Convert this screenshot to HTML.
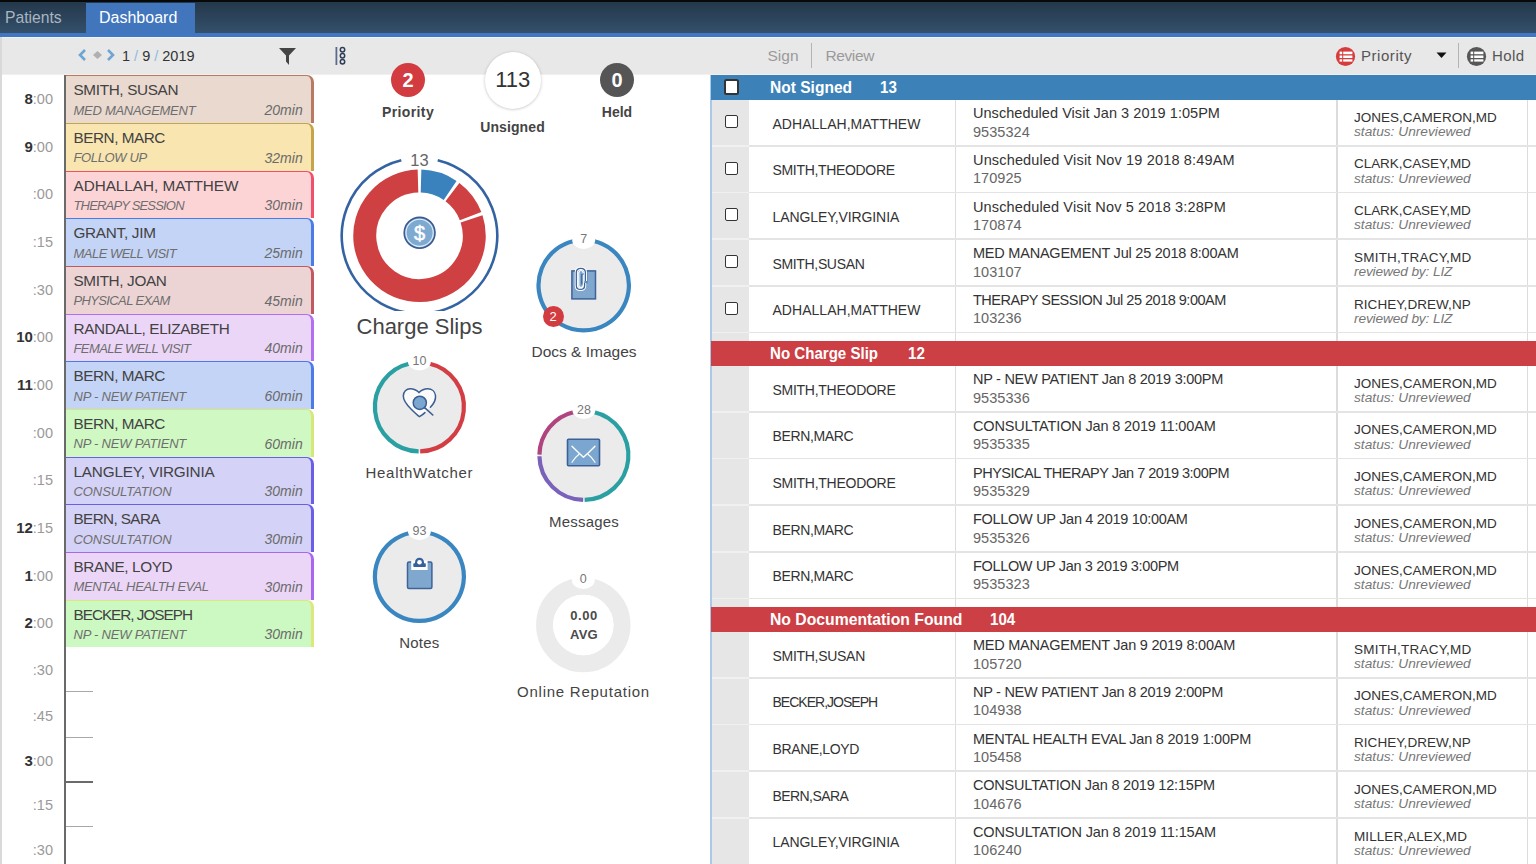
<!DOCTYPE html>
<html><head><meta charset="utf-8">
<style>
*{box-sizing:border-box}
html,body{margin:0;padding:0}
body{width:1536px;height:864px;overflow:hidden;position:relative;background:#fff;font-family:"Liberation Sans",sans-serif;color:#333}
.abs{position:absolute;white-space:nowrap}
.t{position:absolute;white-space:nowrap;line-height:1}
</style></head><body>

<div class="abs" style="left:0;top:0;width:1536px;height:2px;background:#07090b"></div>
<div class="abs" style="left:0;top:2px;width:1536px;height:31px;background:linear-gradient(#24384b,#34506b)"></div>
<div class="abs" style="left:85.5px;top:2.5px;width:109.5px;height:31px;background:#4176bd"></div>
<div class="abs" style="left:0;top:33px;width:1536px;height:4px;background:#3f77c2"></div>
<div class="t" style="left:5px;top:10.26px;font-size:15.7px;color:#a9b5c1">Patients</div>
<div class="t" style="left:99px;top:10.10px;font-size:16px;color:#fff">Dashboard</div>
<div class="abs" style="left:0;top:37px;width:1536px;height:38px;background:#e8e8e8;border-top:1.5px solid #f1f2f4;border-bottom:1.2px solid #f0f0f0"></div>
<svg class="abs" style="left:76px;top:47px" width="44" height="16" viewBox="0 0 44 16">
<path d="M9 3 L4 8 L9 13" fill="none" stroke="#6ea5d2" stroke-width="2.6"/>
<path d="M21.5 4 L26 8 L21.5 12 L17 8 Z" fill="#b0b0b0"/>
<path d="M32 3 L37 8 L32 13" fill="none" stroke="#6ea5d2" stroke-width="2.6"/>
</svg>
<div class="t" style="left:122px;top:48.88px;font-size:14.5px;color:#333">1 <span style="color:#8dbbe0">/</span> 9 <span style="color:#8dbbe0">/</span> 2019</div>
<svg class="abs" style="left:278px;top:47px" width="20" height="19" viewBox="0 0 20 19">
<path d="M1 1 L18 1 L11 8.5 L11 18 L8 14.5 L8 8.5 Z" fill="#444"/>
</svg>
<svg class="abs" style="left:333px;top:46px" width="16" height="20" viewBox="0 0 16 20">
<rect x="2.5" y="1" width="1.8" height="18" fill="#5a6a88"/>
<circle cx="9.5" cy="3.8" r="2.2" fill="none" stroke="#2e3c58" stroke-width="1.5"/>
<circle cx="9.5" cy="9.8" r="2.2" fill="none" stroke="#2e3c58" stroke-width="1.5"/>
<circle cx="9.5" cy="15.8" r="2.2" fill="none" stroke="#2e3c58" stroke-width="1.5"/>
</svg>
<div class="t" style="left:767.5px;top:48.03px;font-size:15.5px;color:#9a9a9a">Sign</div>
<div class="abs" style="left:811px;top:42.5px;width:1.2px;height:25.5px;background:#b4b4b4"></div>
<div class="t" style="left:825.5px;top:48.03px;font-size:15.5px;letter-spacing:-0.4px;color:#9a9a9a">Review</div>
<svg class="abs" style="left:1335.0px;top:45.5px" width="21" height="21" viewBox="0 0 21 21">
<circle cx="10.5" cy="10.5" r="9.6" fill="#d63c3c"/>
<rect x="4.6" y="5.6" width="2.6" height="2.6" fill="#fff"/><rect x="8.2" y="5.6" width="9.2" height="2.6" fill="#fff"/>
<rect x="4.6" y="9.5" width="2.6" height="2.5" fill="#fff"/><rect x="8.2" y="9.5" width="9.2" height="2.5" fill="#fff"/>
<rect x="4.6" y="13.3" width="2.6" height="2.3" fill="#fff"/><rect x="8.2" y="13.3" width="9.2" height="2.3" fill="#fff"/>
</svg>
<div class="t" style="left:1361px;top:47.55px;font-size:15px;letter-spacing:0.55px;color:#555">Priority</div>
<svg class="abs" style="left:1436px;top:52px" width="11" height="7" viewBox="0 0 11 7"><path d="M0.5 0.5 L10.5 0.5 L5.5 6 Z" fill="#111"/></svg>
<div class="abs" style="left:1458px;top:42.5px;width:1.2px;height:25.5px;background:#b4b4b4"></div>
<svg class="abs" style="left:1465.5px;top:45.5px" width="21" height="21" viewBox="0 0 21 21">
<circle cx="10.5" cy="10.5" r="9.6" fill="#575757"/>
<rect x="4.6" y="5.6" width="2.6" height="2.6" fill="#fff"/><rect x="8.2" y="5.6" width="9.2" height="2.6" fill="#fff"/>
<rect x="4.6" y="9.5" width="2.6" height="2.5" fill="#fff"/><rect x="8.2" y="9.5" width="9.2" height="2.5" fill="#fff"/>
<rect x="4.6" y="13.3" width="2.6" height="2.3" fill="#fff"/><rect x="8.2" y="13.3" width="9.2" height="2.3" fill="#fff"/>
</svg>
<div class="t" style="left:1492px;top:47.55px;font-size:15px;letter-spacing:0.4px;color:#555">Hold</div>
<div class="abs" style="left:0;top:37px;width:2px;height:827px;background:#d9d9d9"></div>
<div class="abs" style="left:64px;top:75px;width:2.2px;height:789px;background:#6a6a6a"></div>
<div class="abs" style="left:66.2px;top:75.40px;width:247.8px;height:47.67px;background:#e9d9cf;border-top:1px solid #b97a64;border-right:3px solid #b97a64;border-top-right-radius:7px"></div>
<div class="t" style="left:73.5px;top:82.30px;font-size:15.3px;letter-spacing:-0.350px;color:#424242">SMITH, SUSAN</div>
<div class="t" style="left:73.5px;top:103.55px;font-size:13px;font-style:italic;letter-spacing:-0.277px;color:#6e6e6e">MED MANAGEMENT</div>
<div class="t" style="left:2.6999999999999886px;top:102.90px;font-size:14px;width:300px;text-align:right;font-style:italic;color:#6a6a6a">20min</div>
<div class="abs" style="left:66.2px;top:123.07px;width:247.8px;height:47.67px;background:#f9e5b0;border-top:1px solid #c4a549;border-right:3px solid #c4a549;border-top-right-radius:7px"></div>
<div class="t" style="left:73.5px;top:129.97px;font-size:15.3px;letter-spacing:-0.465px;color:#424242">BERN, MARC</div>
<div class="t" style="left:73.5px;top:151.22px;font-size:13px;font-style:italic;letter-spacing:-0.375px;color:#6e6e6e">FOLLOW UP</div>
<div class="t" style="left:2.6999999999999886px;top:150.57px;font-size:14px;width:300px;text-align:right;font-style:italic;color:#6a6a6a">32min</div>
<div class="abs" style="left:66.2px;top:170.74px;width:247.8px;height:47.67px;background:#fdd4d6;border-top:1px solid #f1506c;border-right:3px solid #f1506c;border-top-right-radius:7px"></div>
<div class="t" style="left:73.5px;top:177.64px;font-size:15.3px;letter-spacing:-0.033px;color:#424242">ADHALLAH, MATTHEW</div>
<div class="t" style="left:73.5px;top:198.89px;font-size:13px;font-style:italic;letter-spacing:-0.825px;color:#6e6e6e">THERAPY SESSION</div>
<div class="t" style="left:2.6999999999999886px;top:198.24px;font-size:14px;width:300px;text-align:right;font-style:italic;color:#6a6a6a">30min</div>
<div class="abs" style="left:66.2px;top:218.41px;width:247.8px;height:47.67px;background:#c4d4f6;border-top:1px solid #4a7be6;border-right:3px solid #4a7be6;border-top-right-radius:7px"></div>
<div class="t" style="left:73.5px;top:225.31px;font-size:15.3px;letter-spacing:-0.288px;color:#424242">GRANT, JIM</div>
<div class="t" style="left:73.5px;top:246.56px;font-size:13px;font-style:italic;letter-spacing:-0.513px;color:#6e6e6e">MALE WELL VISIT</div>
<div class="t" style="left:2.6999999999999886px;top:245.91px;font-size:14px;width:300px;text-align:right;font-style:italic;color:#6a6a6a">25min</div>
<div class="abs" style="left:66.2px;top:266.08px;width:247.8px;height:47.67px;background:#edd4d4;border-top:1px solid #c05a60;border-right:3px solid #c05a60;border-top-right-radius:7px"></div>
<div class="t" style="left:73.5px;top:272.98px;font-size:15.3px;letter-spacing:-0.354px;color:#424242">SMITH, JOAN</div>
<div class="t" style="left:73.5px;top:294.23px;font-size:13px;font-style:italic;letter-spacing:-0.633px;color:#6e6e6e">PHYSICAL EXAM</div>
<div class="t" style="left:2.6999999999999886px;top:293.58px;font-size:14px;width:300px;text-align:right;font-style:italic;color:#6a6a6a">45min</div>
<div class="abs" style="left:66.2px;top:313.75px;width:247.8px;height:47.67px;background:#ecd6f8;border-top:1px solid #b46ef0;border-right:3px solid #b46ef0;border-top-right-radius:7px"></div>
<div class="t" style="left:73.5px;top:320.64px;font-size:15.3px;letter-spacing:-0.360px;color:#424242">RANDALL, ELIZABETH</div>
<div class="t" style="left:73.5px;top:341.90px;font-size:13px;font-style:italic;letter-spacing:-0.590px;color:#6e6e6e">FEMALE WELL VISIT</div>
<div class="t" style="left:2.6999999999999886px;top:341.25px;font-size:14px;width:300px;text-align:right;font-style:italic;color:#6a6a6a">40min</div>
<div class="abs" style="left:66.2px;top:361.42px;width:247.8px;height:47.67px;background:#c4d4f6;border-top:1px solid #4a7be6;border-right:3px solid #4a7be6;border-top-right-radius:7px"></div>
<div class="t" style="left:73.5px;top:368.31px;font-size:15.3px;letter-spacing:-0.465px;color:#424242">BERN, MARC</div>
<div class="t" style="left:73.5px;top:389.57px;font-size:13px;font-style:italic;letter-spacing:-0.215px;color:#6e6e6e">NP - NEW PATIENT</div>
<div class="t" style="left:2.6999999999999886px;top:388.92px;font-size:14px;width:300px;text-align:right;font-style:italic;color:#6a6a6a">60min</div>
<div class="abs" style="left:66.2px;top:409.09px;width:247.8px;height:47.67px;background:#cff8c2;border-top:1px solid #d8e878;border-right:3px solid #d8e878;border-top-right-radius:7px"></div>
<div class="t" style="left:73.5px;top:415.99px;font-size:15.3px;letter-spacing:-0.465px;color:#424242">BERN, MARC</div>
<div class="t" style="left:73.5px;top:437.24px;font-size:13px;font-style:italic;letter-spacing:-0.215px;color:#6e6e6e">NP - NEW PATIENT</div>
<div class="t" style="left:2.6999999999999886px;top:436.59px;font-size:14px;width:300px;text-align:right;font-style:italic;color:#6a6a6a">60min</div>
<div class="abs" style="left:66.2px;top:456.76px;width:247.8px;height:47.67px;background:#d4d2f6;border-top:1px solid #6a5ee6;border-right:3px solid #6a5ee6;border-top-right-radius:7px"></div>
<div class="t" style="left:73.5px;top:463.65px;font-size:15.3px;letter-spacing:-0.191px;color:#424242">LANGLEY, VIRGINIA</div>
<div class="t" style="left:73.5px;top:484.91px;font-size:13px;font-style:italic;letter-spacing:-0.079px;color:#6e6e6e">CONSULTATION</div>
<div class="t" style="left:2.6999999999999886px;top:484.26px;font-size:14px;width:300px;text-align:right;font-style:italic;color:#6a6a6a">30min</div>
<div class="abs" style="left:66.2px;top:504.43px;width:247.8px;height:47.67px;background:#d4d2f6;border-top:1px solid #6a5ee6;border-right:3px solid #6a5ee6;border-top-right-radius:7px"></div>
<div class="t" style="left:73.5px;top:511.33px;font-size:15.3px;letter-spacing:-0.626px;color:#424242">BERN, SARA</div>
<div class="t" style="left:73.5px;top:532.58px;font-size:13px;font-style:italic;letter-spacing:-0.079px;color:#6e6e6e">CONSULTATION</div>
<div class="t" style="left:2.6999999999999886px;top:531.93px;font-size:14px;width:300px;text-align:right;font-style:italic;color:#6a6a6a">30min</div>
<div class="abs" style="left:66.2px;top:552.10px;width:247.8px;height:47.67px;background:#ecd6f8;border-top:1px solid #a868ee;border-right:3px solid #a868ee;border-top-right-radius:7px"></div>
<div class="t" style="left:73.5px;top:559.00px;font-size:15.3px;letter-spacing:-0.378px;color:#424242">BRANE, LOYD</div>
<div class="t" style="left:73.5px;top:580.25px;font-size:13px;font-style:italic;letter-spacing:-0.362px;color:#6e6e6e">MENTAL HEALTH EVAL</div>
<div class="t" style="left:2.6999999999999886px;top:579.60px;font-size:14px;width:300px;text-align:right;font-style:italic;color:#6a6a6a">30min</div>
<div class="abs" style="left:66.2px;top:599.77px;width:247.8px;height:47.67px;background:#ccf8c2;border-top:1px solid #dce87c;border-right:3px solid #dce87c;border-top-right-radius:7px"></div>
<div class="t" style="left:73.5px;top:606.66px;font-size:15.3px;letter-spacing:-1.008px;color:#424242">BECKER, JOSEPH</div>
<div class="t" style="left:73.5px;top:627.92px;font-size:13px;font-style:italic;letter-spacing:-0.215px;color:#6e6e6e">NP - NEW PATIENT</div>
<div class="t" style="left:2.6999999999999886px;top:627.27px;font-size:14px;width:300px;text-align:right;font-style:italic;color:#6a6a6a">30min</div>
<div class="t" style="left:-247px;top:91.11px;font-size:14.5px;width:300px;text-align:right;color:#9a9a9a"><b style="color:#333;font-size:15px">8</b>:00</div>
<div class="t" style="left:-247px;top:138.78px;font-size:14.5px;width:300px;text-align:right;color:#9a9a9a"><b style="color:#333;font-size:15px">9</b>:00</div>
<div class="t" style="left:-247px;top:186.45px;font-size:14.5px;width:300px;text-align:right;color:#9a9a9a"><b style="color:#333;font-size:15px"></b>:00</div>
<div class="t" style="left:-247px;top:234.12px;font-size:14.5px;width:300px;text-align:right;color:#9a9a9a"><b style="color:#333;font-size:15px"></b>:15</div>
<div class="t" style="left:-247px;top:281.79px;font-size:14.5px;width:300px;text-align:right;color:#9a9a9a"><b style="color:#333;font-size:15px"></b>:30</div>
<div class="t" style="left:-247px;top:329.46px;font-size:14.5px;width:300px;text-align:right;color:#9a9a9a"><b style="color:#333;font-size:15px">10</b>:00</div>
<div class="t" style="left:-247px;top:377.13px;font-size:14.5px;width:300px;text-align:right;color:#9a9a9a"><b style="color:#333;font-size:15px">11</b>:00</div>
<div class="t" style="left:-247px;top:424.80px;font-size:14.5px;width:300px;text-align:right;color:#9a9a9a"><b style="color:#333;font-size:15px"></b>:00</div>
<div class="t" style="left:-247px;top:472.47px;font-size:14.5px;width:300px;text-align:right;color:#9a9a9a"><b style="color:#333;font-size:15px"></b>:15</div>
<div class="t" style="left:-247px;top:520.14px;font-size:14.5px;width:300px;text-align:right;color:#9a9a9a"><b style="color:#333;font-size:15px">12</b>:15</div>
<div class="t" style="left:-247px;top:567.81px;font-size:14.5px;width:300px;text-align:right;color:#9a9a9a"><b style="color:#333;font-size:15px">1</b>:00</div>
<div class="t" style="left:-247px;top:615.48px;font-size:14.5px;width:300px;text-align:right;color:#9a9a9a"><b style="color:#333;font-size:15px">2</b>:00</div>
<div class="t" style="left:-247px;top:662.48px;font-size:14.5px;width:300px;text-align:right;color:#9a9a9a"><b style="color:#333;font-size:15px"></b>:30</div>
<div class="t" style="left:-247px;top:707.67px;font-size:14.5px;width:300px;text-align:right;color:#9a9a9a"><b style="color:#333;font-size:15px"></b>:45</div>
<div class="t" style="left:-247px;top:752.77px;font-size:14.5px;width:300px;text-align:right;color:#9a9a9a"><b style="color:#333;font-size:15px">3</b>:00</div>
<div class="t" style="left:-247px;top:797.27px;font-size:14.5px;width:300px;text-align:right;color:#9a9a9a"><b style="color:#333;font-size:15px"></b>:15</div>
<div class="t" style="left:-247px;top:841.88px;font-size:14.5px;width:300px;text-align:right;color:#9a9a9a"><b style="color:#333;font-size:15px"></b>:30</div>
<div class="abs" style="left:66.2px;top:691px;width:27.3px;height:1px;background:#a8a8a8"></div>
<div class="abs" style="left:66.2px;top:737px;width:27.3px;height:1px;background:#a8a8a8"></div>
<div class="abs" style="left:66.2px;top:781px;width:27.3px;height:1.6px;background:#6a6a6a"></div>
<div class="abs" style="left:66.2px;top:826px;width:27.3px;height:1px;background:#a8a8a8"></div>
<div class="abs" style="left:391px;top:62.5px;width:34px;height:34px;border-radius:50%;background:#d23b3f"></div>
<div class="t" style="left:258.0px;top:70.20px;font-size:20px;width:300px;text-align:center;font-weight:bold;color:#fff">2</div>
<div class="abs" style="left:484.5px;top:52px;width:56.5px;height:56.5px;border-radius:50%;background:#fff;box-shadow:0 0.5px 3px rgba(0,0,0,0.25)"></div>
<div class="t" style="left:362.70000000000005px;top:69.30px;font-size:22px;width:300px;text-align:center;color:#333">113</div>
<div class="abs" style="left:600px;top:62.5px;width:34px;height:34px;border-radius:50%;background:#555"></div>
<div class="t" style="left:467.0px;top:70.20px;font-size:20px;width:300px;text-align:center;font-weight:bold;color:#fff">0</div>
<div class="t" style="left:258.0px;top:105.30px;font-size:14px;width:300px;text-align:center;font-weight:bold;letter-spacing:0.4px;color:#444">Priority</div>
<div class="t" style="left:362.5px;top:119.90px;font-size:14px;width:300px;text-align:center;font-weight:bold;letter-spacing:0.1px;color:#444">Unsigned</div>
<div class="t" style="left:467.0px;top:105.30px;font-size:14px;width:300px;text-align:center;font-weight:bold;color:#444">Held</div>
<svg class="abs" style="left:0;top:0" width="710" height="864" viewBox="0 0 710 864">
<defs><clipPath id="cs"><rect x="330" y="140" width="180" height="171"/></clipPath></defs>
<path clip-path="url(#cs)" d="M437.66 160.15 A77.8 77.8 0 1 1 401.34 160.15" fill="none" stroke="#3463a3" stroke-width="2.6"/>
<path d="M421.03 181.07 A54.75 54.75 0 0 1 450.12 190.41" fill="none" stroke="#3a82bd" stroke-width="23"/>
<path d="M452.45 192.07 A54.75 54.75 0 0 1 470.61 216.18" fill="none" stroke="#cf4042" stroke-width="23"/>
<path d="M471.57 218.88 A54.75 54.75 0 1 1 417.97 181.07" fill="none" stroke="#cf4042" stroke-width="23"/>
<circle cx="419.6" cy="232.8" r="15.4" fill="#7eaad2" stroke="#3a5c92" stroke-width="1.6"/>
<circle cx="419.6" cy="232.8" r="13.6" fill="none" stroke="#e4eef8" stroke-width="1.1"/>
<circle cx="583.7" cy="285.2" r="46.3" fill="#ebebeb"/><path d="M593.48 241.07 A45.199999999999996 45.199999999999996 0 1 1 573.92 241.07" fill="none" stroke="#3a86c0" stroke-width="4.2"/>
<circle cx="419.4" cy="406.9" r="45.6" fill="#ebebeb"/><path d="M429.03 363.45 A44.5 44.5 0 0 1 420.18 451.39" fill="none" stroke="#d23e44" stroke-width="4.2"/><path d="M418.62 451.39 A44.5 44.5 0 0 1 409.77 363.45" fill="none" stroke="#2aa0a3" stroke-width="4.2"/>
<circle cx="583.9" cy="455.4" r="45.6" fill="#ebebeb"/><path d="M593.53 411.95 A44.5 44.5 0 0 1 584.68 499.89" fill="none" stroke="#2aa0a3" stroke-width="4.2"/><path d="M583.12 499.89 A44.5 44.5 0 0 1 539.41 456.18" fill="none" stroke="#7a62bb" stroke-width="4.2"/><path d="M539.41 454.62 A44.5 44.5 0 0 1 574.27 411.95" fill="none" stroke="#b0447e" stroke-width="4.2"/>
<circle cx="419.4" cy="576.4" r="45.6" fill="#ebebeb"/><path d="M429.03 532.95 A44.5 44.5 0 1 1 409.77 532.95" fill="none" stroke="#3a86c0" stroke-width="4.2"/>
<circle cx="583.3" cy="625" r="38.7" fill="none" stroke="#ebebeb" stroke-width="17"/>
<circle cx="583.3" cy="625" r="30.2" fill="#fff"/>
<ellipse cx="583.7" cy="240" rx="11.5" ry="9" fill="#fff"/>
<ellipse cx="419.4" cy="361.5" rx="11.5" ry="9" fill="#fff"/>
<ellipse cx="583.9" cy="410" rx="11.5" ry="9" fill="#fff"/>
<ellipse cx="419.4" cy="531" rx="11.5" ry="9" fill="#fff"/>
<ellipse cx="583.3" cy="580" rx="11.5" ry="9" fill="#fff"/>
<ellipse cx="419.5" cy="159" rx="18" ry="7" fill="#fff"/>
</svg>
<div class="t" style="left:269.5px;top:151.97px;font-size:16.5px;width:300px;text-align:center;color:#666">13</div>
<div class="t" style="left:269.6px;top:223.00px;font-size:20px;width:300px;text-align:center;color:#fff;-webkit-text-stroke:0.5px #fff">$</div>
<div class="t" style="left:433.70000000000005px;top:233.18px;font-size:12.5px;width:300px;text-align:center;color:#777">7</div>
<div class="t" style="left:269.4px;top:355.18px;font-size:12.5px;width:300px;text-align:center;color:#777">10</div>
<div class="t" style="left:433.9px;top:404.38px;font-size:12.5px;width:300px;text-align:center;color:#777">28</div>
<div class="t" style="left:269.4px;top:524.88px;font-size:12.5px;width:300px;text-align:center;color:#777">93</div>
<div class="t" style="left:433.29999999999995px;top:573.17px;font-size:12.5px;width:300px;text-align:center;color:#777">0</div>
<div class="t" style="left:269.5px;top:316.30px;font-size:22px;width:300px;text-align:center;color:#444">Charge Slips</div>
<div class="t" style="left:434.0px;top:344.02px;font-size:15.5px;width:300px;text-align:center;color:#444">Docs &amp; Images</div>
<div class="t" style="left:269.4px;top:464.55px;font-size:15px;width:300px;text-align:center;letter-spacing:0.7px;color:#444">HealthWatcher</div>
<div class="t" style="left:434.0px;top:514.05px;font-size:15px;width:300px;text-align:center;letter-spacing:0.2px;color:#444">Messages</div>
<div class="t" style="left:269.4px;top:635.05px;font-size:15px;width:300px;text-align:center;letter-spacing:0.2px;color:#444">Notes</div>
<div class="t" style="left:433.5px;top:684.45px;font-size:15px;width:300px;text-align:center;letter-spacing:0.75px;color:#444">Online Reputation</div>
<div class="t" style="left:434.0px;top:609.15px;font-size:13px;width:300px;text-align:center;font-weight:bold;letter-spacing:0.6px;color:#4a4a4a">0.00</div>
<div class="t" style="left:434.0px;top:628.15px;font-size:13px;width:300px;text-align:center;font-weight:bold;letter-spacing:0.2px;color:#4a4a4a">AVG</div>
<svg class="abs" style="left:569px;top:264px" width="30" height="37" viewBox="0 0 30 37">
<rect x="2.9" y="6.9" width="23.6" height="28" fill="#80a7cd" stroke="#3d6398" stroke-width="1.5"/>
<rect x="16.5" y="7.5" width="2.2" height="12" fill="#5f86b4"/>
<path d="M14.2 11 L14.2 21.5 Q14.2 23.3 12 23.3 Q9.8 23.3 9.8 21.5 L9.8 9 Q9.8 6.6 12 6.6 Q14.2 6.6 14.2 9" fill="none" stroke="#fff" stroke-width="1.2"/>
<path d="M16.4 17 L16.4 8.6 Q16.4 4.3 11.8 4.3 Q7.3 4.3 7.3 8.6 L7.3 21.4 Q7.3 25.4 11.4 25.4 Q15.6 25.4 15.6 21.4 L15.6 19" fill="none" stroke="#fff" stroke-width="3.2"/>
<path d="M16.4 17 L16.4 8.6 Q16.4 4.3 11.8 4.3 Q7.3 4.3 7.3 8.6 L7.3 21.4 Q7.3 25.4 11.4 25.4 Q15.6 25.4 15.6 21.4 L15.6 19" fill="none" stroke="#3d6398" stroke-width="1.3"/>
<path d="M12.8 10 L12.8 20.5" fill="none" stroke="#3d6398" stroke-width="1.3"/>
</svg>
<div class="abs" style="left:542.5px;top:305.5px;width:21px;height:21px;border-radius:50%;background:#d23b3f"></div>
<div class="t" style="left:403.0px;top:309.95px;font-size:13px;width:300px;text-align:center;color:#fff">2</div>
<svg class="abs" style="left:400px;top:385px" width="38" height="34" viewBox="0 0 38 34">
<path d="M19 7.6 C21 5.5 24 3.8 27.8 3.8 C31.5 3.8 35 6 35.5 10.5 C36 15 34 18.5 30.4 22.2 L19.5 31.7 C17 30 14 27 11 24 C7 20 3.3 16 3.3 11 C3.3 6.5 6.5 3.8 10.2 3.8 C14 3.8 17 5.5 19 7.6 Z" fill="#fbfbfb"/>
<path d="M30.4 22.2 C34 18.5 36 15 35.5 10.5 C35 6 31.5 3.8 27.8 3.8 C24 3.8 21 5.5 19 7.6 C17 5.5 14 3.8 10.2 3.8 C6.5 3.8 3.3 6.5 3.3 11 C3.3 16 7 20 11 24 C14 27 17 30 19.5 31.7 C21.5 30.5 23.5 29 24.9 27.6" fill="none" stroke="#3a5d94" stroke-width="1.5" stroke-linecap="round"/>
<circle cx="19.8" cy="17.8" r="6.6" fill="#7ba6cf" stroke="#3a5d94" stroke-width="1.5"/>
<path d="M24.6 22.6 L32.8 30" stroke="#3a5d94" stroke-width="1.6" stroke-linecap="round"/>
</svg>
<svg class="abs" style="left:566px;top:438px" width="35" height="29" viewBox="0 0 35 29">
<rect x="1.5" y="1.2" width="32" height="26.5" rx="1" fill="#7ba6cf" stroke="#3d6097" stroke-width="1.6"/>
<path d="M6 8.3 Q14 16.3 17.5 19.2 Q21 16.3 29 8.3" fill="none" stroke="#fff" stroke-width="1.4" stroke-linecap="round"/>
<path d="M6 24.3 Q9 19.3 13 16.3 M29 24.3 Q26 19.3 22 16.3" fill="none" stroke="#fff" stroke-width="1.2" stroke-linecap="round"/>
</svg>
<svg class="abs" style="left:404px;top:555px" width="31" height="37" viewBox="0 0 31 37">
<rect x="3.5" y="6.9" width="24.4" height="26.5" rx="1.5" fill="#80a7cd" stroke="#3d6398" stroke-width="1.5"/>
<rect x="7.2" y="5.5" width="16.4" height="9.5" fill="#fdfdfd"/>
<rect x="9.3" y="8.3" width="12.5" height="3.8" rx="0.8" fill="#35609a"/>
<path d="M11 9 L11 7.2 A4.5 4.5 0 0 1 20 7.2 L20 9 Z" fill="#35609a"/>
<circle cx="15.5" cy="7.2" r="2.3" fill="#fff"/>
</svg>
<div class="abs" style="left:710px;top:75px;width:2px;height:789px;background:#a9c9e8"></div>
<div class="abs" style="left:712px;top:100px;width:37px;height:764px;background:#e6e6e6"></div>
<div class="abs" style="left:955px;top:100px;width:1.3px;height:764px;background:#dcdcdc"></div>
<div class="abs" style="left:1336.3px;top:100px;width:1.3px;height:764px;background:#dcdcdc"></div>
<div class="abs" style="left:1527px;top:100px;width:1.3px;height:764px;background:#dcdcdc"></div>
<div class="abs" style="left:711px;top:75px;width:825px;height:25px;background:#3c82b9"></div>
<div class="t" style="left:769.7px;top:79.15px;font-size:17px;font-weight:bold;color:#fff;transform:scaleX(0.915);transform-origin:0 0">Not Signed</div>
<div class="t" style="left:880px;top:79.15px;font-size:17px;font-weight:bold;color:#fff;transform:scaleX(0.89);transform-origin:0 0">13</div>
<div class="abs" style="left:724px;top:79.3px;width:14.5px;height:15.5px;border:2px solid #333;border-radius:2.5px;background:#fff"></div>
<div class="abs" style="left:712px;top:144.90px;width:37px;height:1.8px;background:#f0f0f0"></div><div class="abs" style="left:749px;top:144.90px;width:787px;height:1.8px;background:#e4e4e4"></div>
<div class="abs" style="left:725px;top:115.00px;width:13px;height:13px;border:1.6px solid #333;border-radius:2px;background:#fff"></div>
<div class="t" style="left:772.5px;top:116.60px;font-size:14px;letter-spacing:0.028px;color:#333">ADHALLAH,MATTHEW</div>
<div class="t" style="left:973px;top:106.38px;font-size:14.5px;letter-spacing:0.040px;color:#333">Unscheduled Visit Jan 3 2019 1:05PM</div>
<div class="t" style="left:973px;top:124.58px;font-size:14.5px;letter-spacing:0.05px;color:#666">9535324</div>
<div class="t" style="left:1354px;top:110.73px;font-size:13.5px;letter-spacing:0.012px;color:#333">JONES,CAMERON,MD</div>
<div class="t" style="left:1354px;top:125.05px;font-size:13.7px;font-style:italic;letter-spacing:0.016px;color:#777">status: Unreviewed</div>
<div class="abs" style="left:712px;top:191.60px;width:37px;height:1.8px;background:#f0f0f0"></div><div class="abs" style="left:749px;top:191.60px;width:787px;height:1.8px;background:#e4e4e4"></div>
<div class="abs" style="left:725px;top:161.70px;width:13px;height:13px;border:1.6px solid #333;border-radius:2px;background:#fff"></div>
<div class="t" style="left:772.5px;top:163.30px;font-size:14px;letter-spacing:-0.327px;color:#333">SMITH,THEODORE</div>
<div class="t" style="left:973px;top:153.07px;font-size:14.5px;letter-spacing:0.157px;color:#333">Unscheduled Visit Nov 19 2018 8:49AM</div>
<div class="t" style="left:973px;top:171.28px;font-size:14.5px;letter-spacing:0.05px;color:#666">170925</div>
<div class="t" style="left:1354px;top:157.42px;font-size:13.5px;letter-spacing:-0.053px;color:#333">CLARK,CASEY,MD</div>
<div class="t" style="left:1354px;top:171.75px;font-size:13.7px;font-style:italic;letter-spacing:0.016px;color:#777">status: Unreviewed</div>
<div class="abs" style="left:712px;top:238.30px;width:37px;height:1.8px;background:#f0f0f0"></div><div class="abs" style="left:749px;top:238.30px;width:787px;height:1.8px;background:#e4e4e4"></div>
<div class="abs" style="left:725px;top:208.40px;width:13px;height:13px;border:1.6px solid #333;border-radius:2px;background:#fff"></div>
<div class="t" style="left:772.5px;top:210.00px;font-size:14px;letter-spacing:-0.090px;color:#333">LANGLEY,VIRGINIA</div>
<div class="t" style="left:973px;top:199.78px;font-size:14.5px;letter-spacing:0.140px;color:#333">Unscheduled Visit Nov 5 2018 3:28PM</div>
<div class="t" style="left:973px;top:217.98px;font-size:14.5px;letter-spacing:0.05px;color:#666">170874</div>
<div class="t" style="left:1354px;top:204.12px;font-size:13.5px;letter-spacing:-0.053px;color:#333">CLARK,CASEY,MD</div>
<div class="t" style="left:1354px;top:218.46px;font-size:13.7px;font-style:italic;letter-spacing:0.016px;color:#777">status: Unreviewed</div>
<div class="abs" style="left:712px;top:285.00px;width:37px;height:1.8px;background:#f0f0f0"></div><div class="abs" style="left:749px;top:285.00px;width:787px;height:1.8px;background:#e4e4e4"></div>
<div class="abs" style="left:725px;top:255.10px;width:13px;height:13px;border:1.6px solid #333;border-radius:2px;background:#fff"></div>
<div class="t" style="left:772.5px;top:256.70px;font-size:14px;letter-spacing:-0.344px;color:#333">SMITH,SUSAN</div>
<div class="t" style="left:973px;top:246.48px;font-size:14.5px;letter-spacing:-0.222px;color:#333">MED MANAGEMENT Jul 25 2018 8:00AM</div>
<div class="t" style="left:973px;top:264.68px;font-size:14.5px;letter-spacing:0.05px;color:#666">103107</div>
<div class="t" style="left:1354px;top:250.83px;font-size:13.5px;letter-spacing:0.213px;color:#333">SMITH,TRACY,MD</div>
<div class="t" style="left:1354px;top:265.16px;font-size:13.7px;font-style:italic;letter-spacing:-0.133px;color:#777">reviewed by: LIZ</div>
<div class="abs" style="left:712px;top:331.70px;width:37px;height:1.8px;background:#f0f0f0"></div><div class="abs" style="left:749px;top:331.70px;width:787px;height:1.8px;background:#e4e4e4"></div>
<div class="abs" style="left:725px;top:301.80px;width:13px;height:13px;border:1.6px solid #333;border-radius:2px;background:#fff"></div>
<div class="t" style="left:772.5px;top:303.40px;font-size:14px;letter-spacing:0.028px;color:#333">ADHALLAH,MATTHEW</div>
<div class="t" style="left:973px;top:293.18px;font-size:14.5px;letter-spacing:-0.498px;color:#333">THERAPY SESSION Jul 25 2018 9:00AM</div>
<div class="t" style="left:973px;top:311.38px;font-size:14.5px;letter-spacing:0.05px;color:#666">103236</div>
<div class="t" style="left:1354px;top:297.52px;font-size:13.5px;letter-spacing:0.055px;color:#333">RICHEY,DREW,NP</div>
<div class="t" style="left:1354px;top:311.86px;font-size:13.7px;font-style:italic;letter-spacing:-0.133px;color:#777">reviewed by: LIZ</div>
<div class="abs" style="left:711px;top:341px;width:825px;height:25px;background:#cc3f44"></div>
<div class="t" style="left:769.7px;top:345.15px;font-size:17px;font-weight:bold;color:#fff;transform:scaleX(0.887);transform-origin:0 0">No Charge Slip</div>
<div class="t" style="left:907.5px;top:345.15px;font-size:17px;font-weight:bold;color:#fff;transform:scaleX(0.89);transform-origin:0 0">12</div>
<div class="abs" style="left:712px;top:410.90px;width:37px;height:1.8px;background:#f0f0f0"></div><div class="abs" style="left:749px;top:410.90px;width:787px;height:1.8px;background:#e4e4e4"></div>
<div class="t" style="left:772.5px;top:382.60px;font-size:14px;letter-spacing:-0.270px;color:#333">SMITH,THEODORE</div>
<div class="t" style="left:973px;top:372.38px;font-size:14.5px;letter-spacing:-0.272px;color:#333">NP - NEW PATIENT Jan 8 2019 3:00PM</div>
<div class="t" style="left:973px;top:390.57px;font-size:14.5px;letter-spacing:0.05px;color:#666">9535336</div>
<div class="t" style="left:1354px;top:376.72px;font-size:13.5px;letter-spacing:0.012px;color:#333">JONES,CAMERON,MD</div>
<div class="t" style="left:1354px;top:391.06px;font-size:13.7px;font-style:italic;letter-spacing:0.016px;color:#777">status: Unreviewed</div>
<div class="abs" style="left:712px;top:457.60px;width:37px;height:1.8px;background:#f0f0f0"></div><div class="abs" style="left:749px;top:457.60px;width:787px;height:1.8px;background:#e4e4e4"></div>
<div class="t" style="left:772.5px;top:429.30px;font-size:14px;letter-spacing:-0.368px;color:#333">BERN,MARC</div>
<div class="t" style="left:973px;top:419.07px;font-size:14.5px;letter-spacing:-0.146px;color:#333">CONSULTATION Jan 8 2019 11:00AM</div>
<div class="t" style="left:973px;top:437.27px;font-size:14.5px;letter-spacing:0.05px;color:#666">9535335</div>
<div class="t" style="left:1354px;top:423.42px;font-size:13.5px;letter-spacing:0.012px;color:#333">JONES,CAMERON,MD</div>
<div class="t" style="left:1354px;top:437.75px;font-size:13.7px;font-style:italic;letter-spacing:0.016px;color:#777">status: Unreviewed</div>
<div class="abs" style="left:712px;top:504.30px;width:37px;height:1.8px;background:#f0f0f0"></div><div class="abs" style="left:749px;top:504.30px;width:787px;height:1.8px;background:#e4e4e4"></div>
<div class="t" style="left:772.5px;top:476.00px;font-size:14px;letter-spacing:-0.270px;color:#333">SMITH,THEODORE</div>
<div class="t" style="left:973px;top:465.77px;font-size:14.5px;letter-spacing:-0.499px;color:#333">PHYSICAL THERAPY Jan 7 2019 3:00PM</div>
<div class="t" style="left:973px;top:483.97px;font-size:14.5px;letter-spacing:0.05px;color:#666">9535329</div>
<div class="t" style="left:1354px;top:470.12px;font-size:13.5px;letter-spacing:0.012px;color:#333">JONES,CAMERON,MD</div>
<div class="t" style="left:1354px;top:484.45px;font-size:13.7px;font-style:italic;letter-spacing:0.016px;color:#777">status: Unreviewed</div>
<div class="abs" style="left:712px;top:551.00px;width:37px;height:1.8px;background:#f0f0f0"></div><div class="abs" style="left:749px;top:551.00px;width:787px;height:1.8px;background:#e4e4e4"></div>
<div class="t" style="left:772.5px;top:522.70px;font-size:14px;letter-spacing:-0.368px;color:#333">BERN,MARC</div>
<div class="t" style="left:973px;top:512.48px;font-size:14.5px;letter-spacing:-0.300px;color:#333">FOLLOW UP Jan 4 2019 10:00AM</div>
<div class="t" style="left:973px;top:530.67px;font-size:14.5px;letter-spacing:0.05px;color:#666">9535326</div>
<div class="t" style="left:1354px;top:516.83px;font-size:13.5px;letter-spacing:0.012px;color:#333">JONES,CAMERON,MD</div>
<div class="t" style="left:1354px;top:531.16px;font-size:13.7px;font-style:italic;letter-spacing:0.016px;color:#777">status: Unreviewed</div>
<div class="abs" style="left:712px;top:597.70px;width:37px;height:1.8px;background:#f0f0f0"></div><div class="abs" style="left:749px;top:597.70px;width:787px;height:1.8px;background:#e4e4e4"></div>
<div class="t" style="left:772.5px;top:569.40px;font-size:14px;letter-spacing:-0.368px;color:#333">BERN,MARC</div>
<div class="t" style="left:973px;top:559.17px;font-size:14.5px;letter-spacing:-0.338px;color:#333">FOLLOW UP Jan 3 2019 3:00PM</div>
<div class="t" style="left:973px;top:577.37px;font-size:14.5px;letter-spacing:0.05px;color:#666">9535323</div>
<div class="t" style="left:1354px;top:563.52px;font-size:13.5px;letter-spacing:0.012px;color:#333">JONES,CAMERON,MD</div>
<div class="t" style="left:1354px;top:577.86px;font-size:13.7px;font-style:italic;letter-spacing:0.016px;color:#777">status: Unreviewed</div>
<div class="abs" style="left:711px;top:607px;width:825px;height:25px;background:#cc3f44"></div>
<div class="t" style="left:769.7px;top:611.15px;font-size:17px;font-weight:bold;color:#fff;transform:scaleX(0.926);transform-origin:0 0">No Documentation Found</div>
<div class="t" style="left:990px;top:611.15px;font-size:17px;font-weight:bold;color:#fff;transform:scaleX(0.89);transform-origin:0 0">104</div>
<div class="abs" style="left:712px;top:676.90px;width:37px;height:1.8px;background:#f0f0f0"></div><div class="abs" style="left:749px;top:676.90px;width:787px;height:1.8px;background:#e4e4e4"></div>
<div class="t" style="left:772.5px;top:648.60px;font-size:14px;letter-spacing:-0.290px;color:#333">SMITH,SUSAN</div>
<div class="t" style="left:973px;top:638.38px;font-size:14.5px;letter-spacing:-0.241px;color:#333">MED MANAGEMENT Jan 9 2019 8:00AM</div>
<div class="t" style="left:973px;top:656.57px;font-size:14.5px;letter-spacing:0.05px;color:#666">105720</div>
<div class="t" style="left:1354px;top:642.73px;font-size:13.5px;letter-spacing:0.213px;color:#333">SMITH,TRACY,MD</div>
<div class="t" style="left:1354px;top:657.06px;font-size:13.7px;font-style:italic;letter-spacing:0.016px;color:#777">status: Unreviewed</div>
<div class="abs" style="left:712px;top:723.60px;width:37px;height:1.8px;background:#f0f0f0"></div><div class="abs" style="left:749px;top:723.60px;width:787px;height:1.8px;background:#e4e4e4"></div>
<div class="t" style="left:772.5px;top:695.30px;font-size:14px;letter-spacing:-0.983px;color:#333">BECKER,JOSEPH</div>
<div class="t" style="left:973px;top:685.08px;font-size:14.5px;letter-spacing:-0.272px;color:#333">NP - NEW PATIENT Jan 8 2019 2:00PM</div>
<div class="t" style="left:973px;top:703.27px;font-size:14.5px;letter-spacing:0.05px;color:#666">104938</div>
<div class="t" style="left:1354px;top:689.43px;font-size:13.5px;letter-spacing:0.012px;color:#333">JONES,CAMERON,MD</div>
<div class="t" style="left:1354px;top:703.76px;font-size:13.7px;font-style:italic;letter-spacing:0.016px;color:#777">status: Unreviewed</div>
<div class="abs" style="left:712px;top:770.30px;width:37px;height:1.8px;background:#f0f0f0"></div><div class="abs" style="left:749px;top:770.30px;width:787px;height:1.8px;background:#e4e4e4"></div>
<div class="t" style="left:772.5px;top:742.00px;font-size:14px;letter-spacing:-0.385px;color:#333">BRANE,LOYD</div>
<div class="t" style="left:973px;top:731.77px;font-size:14.5px;letter-spacing:-0.240px;color:#333">MENTAL HEALTH EVAL Jan 8 2019 1:00PM</div>
<div class="t" style="left:973px;top:749.97px;font-size:14.5px;letter-spacing:0.05px;color:#666">105458</div>
<div class="t" style="left:1354px;top:736.12px;font-size:13.5px;letter-spacing:0.055px;color:#333">RICHEY,DREW,NP</div>
<div class="t" style="left:1354px;top:750.46px;font-size:13.7px;font-style:italic;letter-spacing:0.016px;color:#777">status: Unreviewed</div>
<div class="abs" style="left:712px;top:817.00px;width:37px;height:1.8px;background:#f0f0f0"></div><div class="abs" style="left:749px;top:817.00px;width:787px;height:1.8px;background:#e4e4e4"></div>
<div class="t" style="left:772.5px;top:788.70px;font-size:14px;letter-spacing:-0.580px;color:#333">BERN,SARA</div>
<div class="t" style="left:973px;top:778.48px;font-size:14.5px;letter-spacing:-0.201px;color:#333">CONSULTATION Jan 8 2019 12:15PM</div>
<div class="t" style="left:973px;top:796.67px;font-size:14.5px;letter-spacing:0.05px;color:#666">104676</div>
<div class="t" style="left:1354px;top:782.83px;font-size:13.5px;letter-spacing:0.012px;color:#333">JONES,CAMERON,MD</div>
<div class="t" style="left:1354px;top:797.16px;font-size:13.7px;font-style:italic;letter-spacing:0.016px;color:#777">status: Unreviewed</div>
<div class="abs" style="left:712px;top:863.70px;width:37px;height:1.8px;background:#f0f0f0"></div><div class="abs" style="left:749px;top:863.70px;width:787px;height:1.8px;background:#e4e4e4"></div>
<div class="t" style="left:772.5px;top:835.40px;font-size:14px;letter-spacing:-0.090px;color:#333">LANGLEY,VIRGINIA</div>
<div class="t" style="left:973px;top:825.17px;font-size:14.5px;letter-spacing:-0.134px;color:#333">CONSULTATION Jan 8 2019 11:15AM</div>
<div class="t" style="left:973px;top:843.37px;font-size:14.5px;letter-spacing:0.05px;color:#666">106240</div>
<div class="t" style="left:1354px;top:829.52px;font-size:13.5px;letter-spacing:0.086px;color:#333">MILLER,ALEX,MD</div>
<div class="t" style="left:1354px;top:843.86px;font-size:13.7px;font-style:italic;letter-spacing:0.016px;color:#777">status: Unreviewed</div>
</body></html>
